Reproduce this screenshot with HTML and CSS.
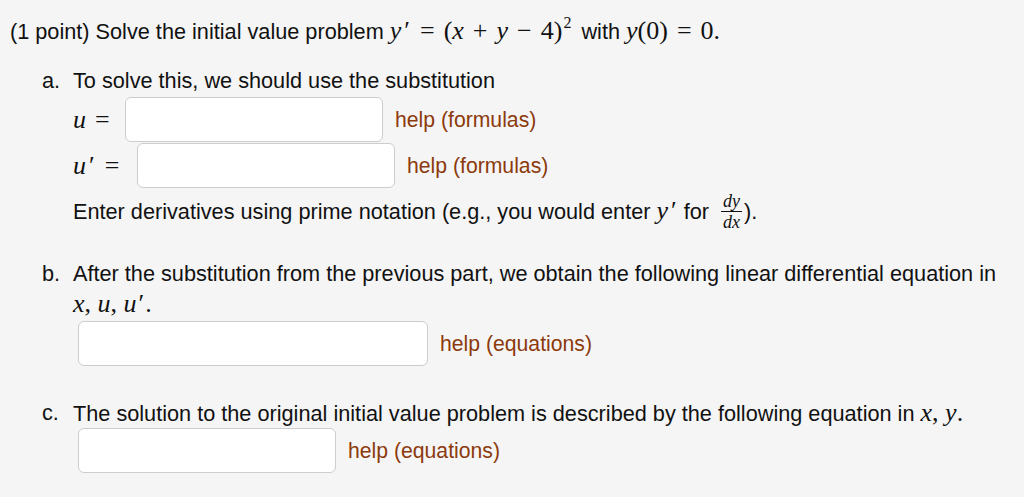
FILE: index.html
```html
<!DOCTYPE html>
<html>
<head>
<meta charset="utf-8">
<link rel="stylesheet" href="styles.css">
</head>
<body>
<div class="page">
  <p class="intro">(1 point) Solve the initial value problem <span class="m"><i>y</i><span class="pr">′</span><span class="op">=</span>(<i>x</i><span class="op">+</span><i>y</i><span class="op">−</span>4)<sup>2</sup></span> with <span class="m"><i>y</i>(0)<span class="op">=</span>0.</span></p>

  <div class="part part-a">
    <span class="lbl">a.</span>
    <div class="body">
      <p class="line">To solve this, we should use the substitution</p>
      <div class="row">
        <span class="m eqlbl"><i>u</i><span class="op">=</span></span>
        <span class="box w258"></span>
        <a class="help">help (formulas)</a>
      </div>
      <div class="row row2">
        <span class="m eqlbl"><i>u</i><span class="pr">′</span><span class="op">=</span></span>
        <span class="box w258"></span>
        <a class="help">help (formulas)</a>
      </div>
      <p class="line enter">Enter derivatives using prime notation (e.g., you would enter <span class="m"><i>y</i><span class="pr">′</span></span> for <span class="frac"><span class="num"><i>dy</i></span><span class="den"><i>dx</i></span></span>).</p>
    </div>
  </div>

  <div class="part part-b">
    <span class="lbl">b.</span>
    <div class="body">
      <p class="line">After the substitution from the previous part, we obtain the following linear differential equation in</p>
      <p class="line m vars"><i>x</i>, <i>u</i>, <i>u</i><span class="pr">′</span>.</p>
      <div class="row rowb">
        <span class="box w350"></span>
        <a class="help">help (equations)</a>
      </div>
    </div>
  </div>

  <div class="part part-c">
    <span class="lbl">c.</span>
    <div class="body">
      <p class="line cline">The solution to the original initial value problem is described by the following equation in <span class="m"><i>x</i>, <i>y</i>.</span></p>
      <div class="row rowc">
        <span class="box w258"></span>
        <a class="help">help (equations)</a>
      </div>
    </div>
  </div>
</div>
</body>
</html>
```
FILE: styles.css
```css
html, body {
  margin: 0;
  padding: 0;
  background: #f5f5f5;
}
body {
  font-family: "Liberation Sans", Arial, sans-serif;
  font-size: 21.7px;
  color: #111;
}
p { margin: 0; }
.page {
  padding: 19px 0 0 10px;
}
.intro {
  line-height: 24px;
  height: 24px;
  white-space: nowrap;
}
.m {
  font-family: "Liberation Serif", "Times New Roman", serif;
  font-size: 26px;
}
.m i { font-style: italic; }
.pr { font-style: normal; margin-left: 3px; margin-right: 1px; }
.op { padding: 0 9px; }
sup { font-size: 16px; line-height: 0; vertical-align: 11px; margin-left: 1px; margin-right: 4px; }

.part {
  display: flex;
  padding-left: 32px;
}
.lbl {
  width: 31px;
  flex: none;
  line-height: 24px;
}
.body { display: flex; flex-direction: column; }
.line { line-height: 24px; height: 24px; white-space: nowrap; }

.part-a { margin-top: 26px; }
.row {
  display: flex;
  align-items: center;
  height: 45px;
}
.part-a .row { margin-top: 4px; }
.part-a .row2 { margin-top: 1px; }
.eqlbl { width: 52px; flex: none; }
.eqlbl .op { padding-right: 0; }
.row2 .eqlbl { width: 64px; }
.box {
  display: block;
  height: 43px;
  background: #fff;
  border: 1px solid #cdcdcd;
  border-radius: 6px;
  box-sizing: content-box;
}
.w258 { width: 256px; }
.w350 { width: 348px; }
.help {
  color: #8c3a0c;
  margin-left: 12px;
  text-decoration: none;
  font-size: 21.2px;
}
.enter { margin-top: 6px; }
.frac {
  display: inline-flex;
  flex-direction: column;
  align-items: center;
  vertical-align: middle;
  font-family: "Liberation Serif", "Times New Roman", serif;
  font-size: 18px;
  line-height: 18px;
  margin: 0 2px 0 6px;
  position: relative;
  top: -2px;
}
.frac .num { border-bottom: 1px solid #111; padding: 0 2px 1px; }
.frac .den { padding-top: 1px; }

.part-b { margin-top: 41px; }
.part-b .lbl, .part-b .line { line-height: 30px; height: 30px; }
.vars .pr { margin-left: 2px; }
.rowb { margin-top: 2px; margin-left: 5px; }

.part-c { margin-top: 32px; }
.part-c .lbl, .part-c .line { line-height: 30px; height: 30px; }
.rowc { margin-left: 5px; }
```
